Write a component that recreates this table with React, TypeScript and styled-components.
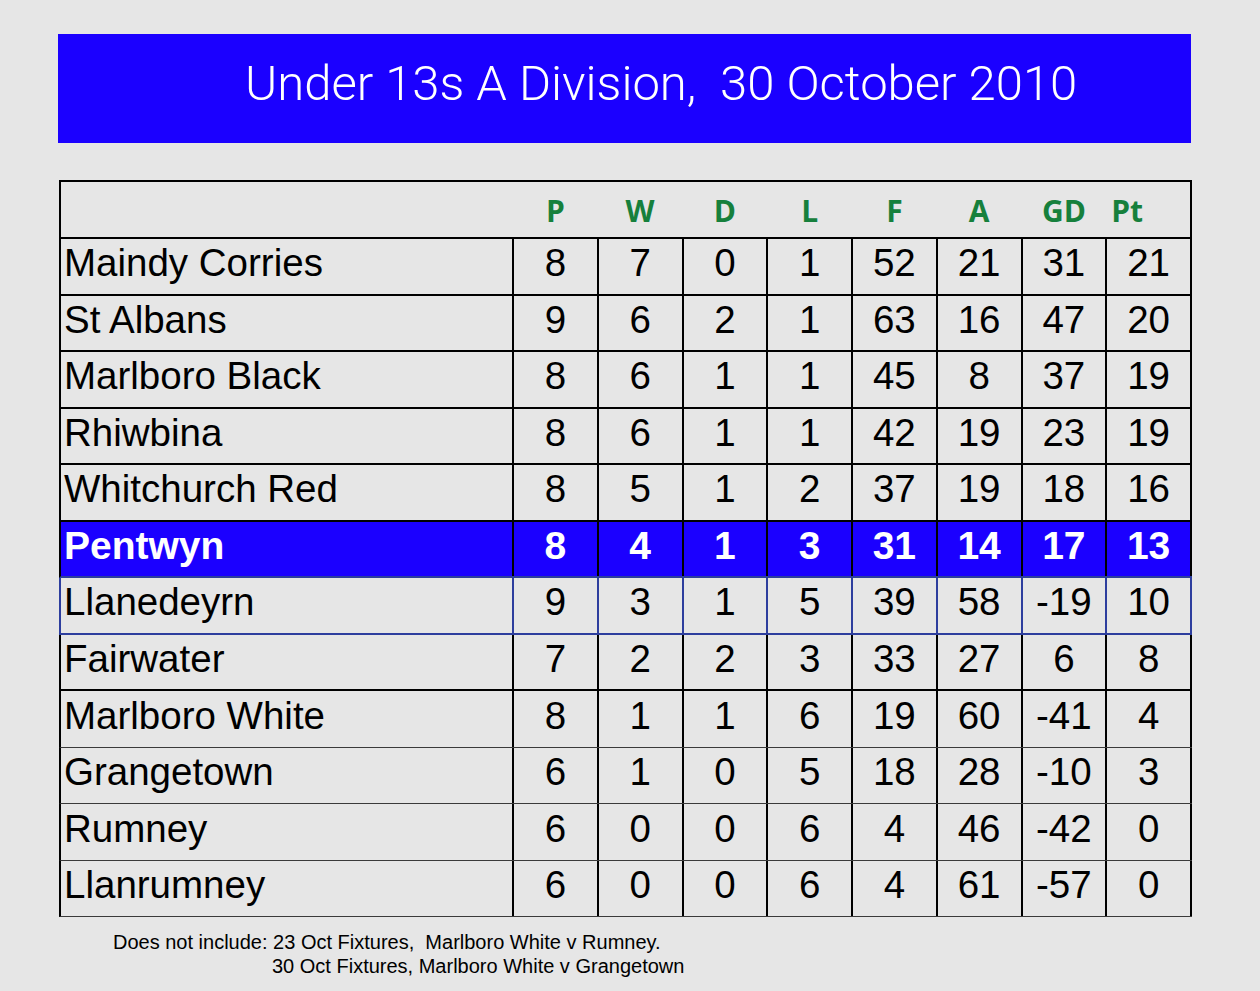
import React from 'react';
import styled, { createGlobalStyle, css } from 'styled-components';

const GlobalStyle = createGlobalStyle`
  html, body {
    margin: 0;
    padding: 0;
    background: #e6e6e6;
  }
  body {
    font-family: "Liberation Sans", Arial, sans-serif;
  }
`;

const BLUE = '#1b00ff';
const RULE_BLUE = '#2d3e9e';

type Tone = 'plain' | 'highlight' | 'outlined';
type Rule = 'thick' | 'thin' | 'blue';

interface Team {
  name: string;
  stats: number[];
  tone: Tone;
  rule: Rule;
}

const columns = ['P', 'W', 'D', 'L', 'F', 'A', 'GD', 'Pt'];

const teams: Team[] = [
  { name: 'Maindy Corries', stats: [8, 7, 0, 1, 52, 21, 31, 21], tone: 'plain', rule: 'thick' },
  { name: 'St Albans', stats: [9, 6, 2, 1, 63, 16, 47, 20], tone: 'plain', rule: 'thick' },
  { name: 'Marlboro Black', stats: [8, 6, 1, 1, 45, 8, 37, 19], tone: 'plain', rule: 'thick' },
  { name: 'Rhiwbina', stats: [8, 6, 1, 1, 42, 19, 23, 19], tone: 'plain', rule: 'thick' },
  { name: 'Whitchurch Red', stats: [8, 5, 1, 2, 37, 19, 18, 16], tone: 'plain', rule: 'thick' },
  { name: 'Pentwyn', stats: [8, 4, 1, 3, 31, 14, 17, 13], tone: 'highlight', rule: 'blue' },
  { name: 'Llanedeyrn', stats: [9, 3, 1, 5, 39, 58, -19, 10], tone: 'outlined', rule: 'blue' },
  { name: 'Fairwater', stats: [7, 2, 2, 3, 33, 27, 6, 8], tone: 'plain', rule: 'thick' },
  { name: 'Marlboro White', stats: [8, 1, 1, 6, 19, 60, -41, 4], tone: 'plain', rule: 'thin' },
  { name: 'Grangetown', stats: [6, 1, 0, 5, 18, 28, -10, 3], tone: 'plain', rule: 'thin' },
  { name: 'Rumney', stats: [6, 0, 0, 6, 4, 46, -42, 0], tone: 'plain', rule: 'thin' },
  { name: 'Llanrumney', stats: [6, 0, 0, 6, 4, 61, -57, 0], tone: 'plain', rule: 'thin' },
];

const Page = styled.div`
  width: 1260px;
  height: 991px;
  box-sizing: border-box;
  padding: 34px 0 0 58px;
  display: flex;
  flex-direction: column;
`;

const Banner = styled.header`
  width: 1133px;
  height: 109px;
  box-sizing: border-box;
  background: ${BLUE};
  display: flex;
  align-items: center;
  padding: 0 0 11px 187px;
`;

const Title = styled.h1`
  margin: 0;
  font-family: Roboto, "Liberation Sans", sans-serif;
  font-weight: 300;
  font-size: 49px;
  color: #ffffff;
  white-space: pre;
`;

const Table = styled.div`
  width: 1133px;
  margin: 37px 0 0 1px;
  display: flex;
  flex-direction: column;
`;

const grid = css`
  display: grid;
  grid-template-columns: 453px repeat(8, 1fr);
  box-sizing: border-box;
`;

const HeadRow = styled.div`
  ${grid};
  height: 59px;
  border: 2px solid #000;
  border-right: none;
`;

const HeadCell = styled.div<{ $offset?: number }>`
  display: flex;
  align-items: center;
  justify-content: ${p => (p.$offset ? 'flex-start' : 'center')};
  padding: 2px 0 0 ${p => p.$offset ?? 0}px;
  border-right: 2px solid transparent;
  font-family: "Open Sans", "DejaVu Sans", sans-serif;
  font-weight: 700;
  font-size: 30px;
  color: #16803c;

  &:last-child {
    border-right-color: #000;
  }
`;

const ruleColor = (rule: Rule) =>
  rule === 'thin' ? '1px solid #3a3a3a' : rule === 'blue' ? `2px solid ${RULE_BLUE}` : '2px solid #000';

const Row = styled.div<{ $tone: Tone; $rule: Rule }>`
  ${grid};
  height: 56.5px;
  border-left: 2px solid ${p => (p.$tone === 'outlined' ? RULE_BLUE : '#000')};
  border-bottom: ${p => ruleColor(p.$rule)};
  background: ${p => (p.$tone === 'highlight' ? BLUE : 'transparent')};
  color: ${p => (p.$tone === 'highlight' ? '#fff' : '#000')};
  font-weight: ${p => (p.$tone === 'highlight' ? 700 : 400)};
  font-size: ${p => (p.$tone === 'highlight' ? 39 : 38.5)}px;
`;

const Cell = styled.div<{ $tone: Tone; $name?: boolean }>`
  display: flex;
  align-items: center;
  justify-content: ${p => (p.$name ? 'flex-start' : 'center')};
  padding: 0 0 6px ${p => (p.$name ? 3 : 0)}px;
  border-right: 2px solid ${p => (p.$tone === 'outlined' ? RULE_BLUE : '#000')};
  white-space: nowrap;
`;

const Note = styled.div`
  margin: 13px 0 0 55px;
  font-size: 20px;
  line-height: 24px;
  color: #000;
  white-space: pre;
`;

const NoteLine = styled.div<{ $indent?: number }>`
  padding-left: ${p => p.$indent ?? 0}px;
`;

export default function App() {
  return (
    <Page>
      <GlobalStyle />
      <Banner>
        <Title>{'Under 13s A Division,  30 October 2010'}</Title>
      </Banner>
      <Table>
        <HeadRow>
          <HeadCell />
          {columns.map(c => (
            <HeadCell key={c} $offset={c === 'Pt' ? 4 : undefined}>
              {c}
            </HeadCell>
          ))}
        </HeadRow>
        {teams.map(t => (
          <Row key={t.name} $tone={t.tone} $rule={t.rule}>
            <Cell $tone={t.tone} $name>
              {t.name}
            </Cell>
            {t.stats.map((s, i) => (
              <Cell key={i} $tone={t.tone}>
                {s}
              </Cell>
            ))}
          </Row>
        ))}
      </Table>
      <Note>
        <NoteLine>{'Does not include: 23 Oct Fixtures,  Marlboro White v Rumney.'}</NoteLine>
        <NoteLine $indent={159}>30 Oct Fixtures, Marlboro White v Grangetown</NoteLine>
      </Note>
    </Page>
  );
}
